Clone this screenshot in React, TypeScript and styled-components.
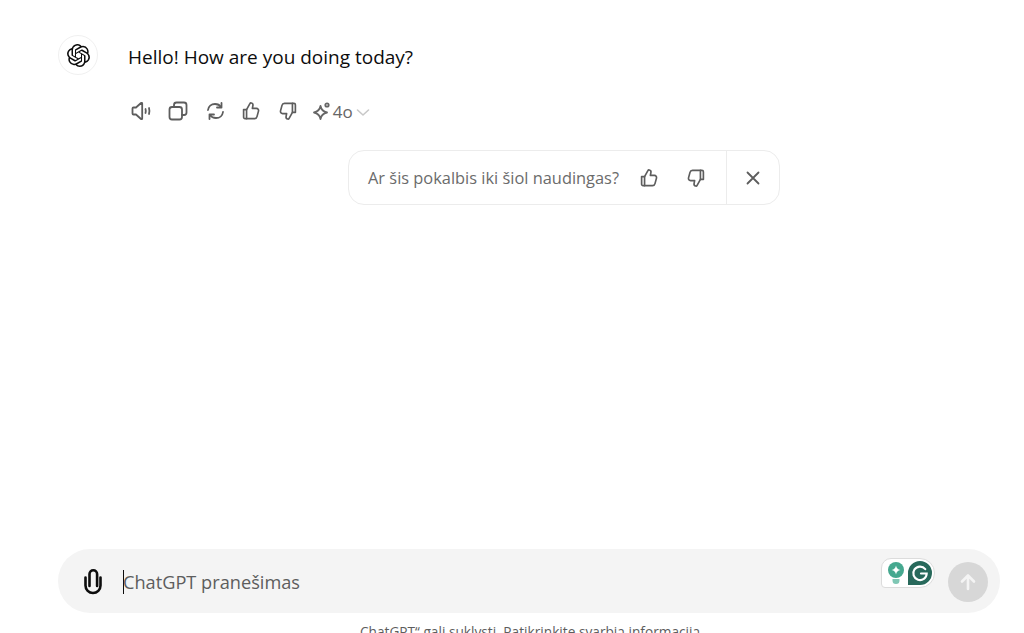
import React from 'react';
import styled, { createGlobalStyle } from 'styled-components';
import { SiOpenai } from 'react-icons/si';

const GlobalStyle = createGlobalStyle`
	html, body {
		margin: 0;
		padding: 0;
		height: 100%;
		overflow: hidden;
		background: #fff;
	}
	body {
		font-family: "Open Sans", "Noto Sans", "Liberation Sans", sans-serif;
	}
`;

const Page = styled.div`
	display: flex;
	flex-direction: column;
	height: 633px;
	overflow: hidden;
	padding: 35px 24px 0 58px;
	box-sizing: border-box;
`;

const Conversation = styled.main`
	flex: 1;
	min-height: 0;
`;

const MessageRow = styled.div`
	display: flex;
	gap: 30px;
`;

const Avatar = styled.div`
	display: flex;
	align-items: center;
	justify-content: center;
	flex: none;
	width: 40px;
	height: 40px;
	box-sizing: border-box;
	border: 1px solid #f0f0f0;
	border-radius: 50%;
	color: #0d0d0d;
	font-size: 23px;
`;

const MessageBody = styled.div`
	display: flex;
	flex-direction: column;
`;

const MessageText = styled.p`
	margin: 9px 0 0;
	font-size: 19px;
	line-height: 27px;
	color: #0d0d0d;
`;

const Actions = styled.div`
	display: flex;
	align-items: center;
	gap: 12.75px;
	margin-top: 28px;
	margin-left: 1px;
	height: 24px;
	color: #5d5d5d;
`;

const ActionIcon = styled.svg`
	display: block;
	width: 24px;
	height: 24px;
	flex: none;
	fill: none;
	stroke: currentColor;
	stroke-width: 1.8;
	stroke-linecap: round;
	stroke-linejoin: round;
`;

const ModelSwitch = styled.div`
	display: flex;
	align-items: center;
	font-size: 17px;
	color: #666;
`;

const ModelName = styled.span`
	margin-left: -4px;
`;

const Chevron = styled.svg`
	width: 14px;
	height: 14px;
	margin-left: 3px;
	margin-top: 2px;
	fill: none;
	stroke: #c8c8c8;
	stroke-width: 1.6;
	stroke-linecap: round;
	stroke-linejoin: round;
`;

const FeedbackCard = styled.div`
	display: flex;
	align-items: stretch;
	width: 432px;
	height: 55px;
	margin: 27px 0 0 290px;
	border: 1px solid #ececec;
	border-radius: 16px;
	box-sizing: border-box;
	color: #5d5d5d;
`;

const FeedbackMain = styled.div`
	display: flex;
	flex: 1;
	align-items: center;
	padding-left: 19px;
	border-right: 1px solid #ececec;
`;

const FeedbackText = styled.span`
	font-size: 16.4px;
	color: #6b6b6b;
`;

const FeedbackButtons = styled.div`
	display: flex;
	align-items: center;
	gap: 23px;
	margin-left: 18px;
`;

const CloseSlot = styled.div`
	display: flex;
	align-items: center;
	justify-content: center;
	flex: none;
	width: 52px;
`;

const Composer = styled.div`
	position: relative;
	display: flex;
	align-items: center;
	flex: none;
	height: 64px;
	padding: 0 12px 0 25px;
	border-radius: 32px;
	background: #f4f4f4;
`;

const Paperclip = styled.svg`
	flex: none;
	width: 20px;
	height: 28px;
	fill: none;
	stroke: #0d0d0d;
	stroke-width: 2.6;
	stroke-linecap: round;
`;

const Caret = styled.span`
	flex: none;
	width: 1px;
	height: 24px;
	margin-left: 20px;
	margin-top: 2px;
	background: #0d0d0d;
`;

const Placeholder = styled.span`
	flex: 1;
	margin-top: 2px;
	margin-left: -1px;
	font-size: 18.2px;
	color: #5d5d5d;
`;

const SendButton = styled.div`
	display: flex;
	align-items: center;
	justify-content: center;
	flex: none;
	width: 40px;
	height: 40px;
	margin-top: 2px;
	border-radius: 50%;
	background: #d7d7d7;
`;

const SendArrow = styled.svg`
	width: 20px;
	height: 20px;
	fill: none;
	stroke: #f4f4f4;
	stroke-width: 2.6;
	stroke-linecap: round;
	stroke-linejoin: round;
`;

/* browser extension badge sitting on top of the input */
const GrammarlyBadge = styled.div`
	position: absolute;
	top: 9px;
	right: 65px;
	display: flex;
	align-items: center;
	gap: 3px;
	width: 54px;
	height: 30px;
	padding-left: 5px;
	box-sizing: border-box;
	background: #fff;
	border: 1px solid #dcdcdc;
	border-radius: 10px 15px 15px 4px;
`;

const Footer = styled.footer`
	flex: none;
	height: 20px;
	box-sizing: border-box;
	padding-top: 10px;
	font-size: 13.7px;
	line-height: 18px;
	white-space: nowrap;
	text-align: center;
	color: #5d5d5d;
`;

const ThumbUp = () => (
	<ActionIcon viewBox="-1 -1 26 26">
		<path d="M4 10.500h3.200v9.800H5.500A1.500 1.500 0 0 1 4 18.800z" />
		<path d="M7.200 10.500l3.600-6.400c.3-.6.9-.9 1.500-.8 1.200.2 2 1.300 1.800 2.500l-.6 3.400h4.400c1.500 0 2.600 1.400 2.200 2.900l-1.600 6c-.3 1.300-1.400 2.200-2.700 2.200H7.200" />
	</ActionIcon>
);

const ThumbDown = () => (
	<ActionIcon viewBox="-1 -1 26 26">
		<path d="M20 13.500h-3.200V3.700h1.700a1.500 1.500 0 0 1 1.500 1.500z" />
		<path d="M16.800 13.500l-3.600 6.400c-.3.600-.9.900-1.500.8-1.200-.2-2-1.300-1.800-2.500l.6-3.400H6.100c-1.500 0-2.600-1.400-2.200-2.900l1.600-6c.3-1.300 1.400-2.200 2.700-2.200h8.600" />
	</ActionIcon>
);

const App: React.FC = () => {
	return (
		<>
			<GlobalStyle />
			<Page>
				<Conversation>
					<MessageRow>
						<Avatar>
							<SiOpenai />
						</Avatar>
						<MessageBody>
							<MessageText>Hello! How are you doing today?</MessageText>
							<Actions>
								<ActionIcon viewBox="0 0 24 24">
									<path d="M3.500 9.500v5c0 .6.400 1 1 1H7l5 4.500c.5.400 1.200.1 1.200-.6V4.600c0-.7-.7-1-1.200-.6L7 8.500H4.500c-.6 0-1 .4-1 1z" />
									<path d="M16.500 10c.4 1.300.4 2.700 0 4" />
									<path d="M20 9c.6 2 .6 4 0 6" />
								</ActionIcon>
								<ActionIcon viewBox="0 0 24 24">
									<rect x="3.500" y="8" width="12.500" height="12.500" rx="2.500" />
									<path d="M8 8V6a2.500 2.500 0 0 1 2.500-2.500H18A2.500 2.500 0 0 1 20.500 6v7.500A2.500 2.500 0 0 1 18 16h-2" />
								</ActionIcon>
								<ActionIcon viewBox="0 0 24 24">
									<path d="M5 11c.4-3.400 3.200-6 7-6 2.800 0 4.800 1.200 6 3" />
									<path d="M18.500 4v4.500H14" />
									<path d="M20 13c-.4 3.400-3.200 6-7 6-2.800 0-4.800-1.200-6-3" />
									<path d="M6.500 20v-4.500H11" />
								</ActionIcon>
								<ThumbUp />
								<ThumbDown />
								<ModelSwitch>
									<ActionIcon viewBox="0 0 24 24">
										<path d="M7.500 7c.8 4 2.500 5.700 6.500 6.500-4 .8-5.700 2.500-6.500 6.500-.8-4-2.500-5.700-6.500-6.500 4-.8 5.700-2.500 6.500-6.500z" />
										<circle cx="14" cy="6" r="1.700" />
									</ActionIcon>
									<ModelName>4o</ModelName>
									<Chevron viewBox="0 0 14 14">
										<path d="M1.500 5L7 10l5.500-5" />
									</Chevron>
								</ModelSwitch>
							</Actions>
						</MessageBody>
					</MessageRow>
					<FeedbackCard>
						<FeedbackMain>
							<FeedbackText>Ar šis pokalbis iki šiol naudingas?</FeedbackText>
							<FeedbackButtons>
								<ThumbUp />
								<ThumbDown />
							</FeedbackButtons>
						</FeedbackMain>
						<CloseSlot>
							<ActionIcon viewBox="0 0 24 24">
								<path d="M6.500 6.500l11 11M17.500 6.500l-11 11" />
							</ActionIcon>
						</CloseSlot>
					</FeedbackCard>
				</Conversation>
				<Composer>
					<Paperclip viewBox="0 0 20 28">
						<path d="M2.500 10.500v8a7.500 7.500 0 0 0 15 0v-8" />
						<path d="M6.500 19V7a3.800 3.800 0 0 1 7.600 0v12" />
					</Paperclip>
					<Caret />
					<Placeholder>ChatGPT pranešimas</Placeholder>
					<GrammarlyBadge>
						<svg width="18" height="22" viewBox="0 0 18 22">
							<circle cx="9" cy="8" r="8" fill="#45a88f" />
							<path d="M9 3.500c.5 2.700 1.800 4 4.500 4.500-2.700.5-4 1.800-4.500 4.500-.5-2.700-1.800-4-4.500-4.500 2.700-.5 4-1.800 4.500-4.500z" fill="#fff" />
							<path d="M5.500 17h7v1.500a3.500 3.500 0 0 1-7 0z" fill="#7fc7b4" />
						</svg>
						<svg width="24" height="24" viewBox="0 0 25 25">
							<path d="M12.500 0a12.500 12.500 0 0 1 0 25H0V12.500A12.500 12.500 0 0 1 12.500 0z" fill="#28695b" />
							<path d="M18 8.500a7 7 0 1 0 1.500 4.500h-6" fill="none" stroke="#fff" strokeWidth="2.200" strokeLinecap="round" />
						</svg>
					</GrammarlyBadge>
					<SendButton>
						<SendArrow viewBox="0 0 20 20">
							<path d="M10 17V3.500M4 9.500l6-6 6 6" />
						</SendArrow>
					</SendButton>
				</Composer>
				<Footer>„ChatGPT“ gali suklysti. Patikrinkite svarbią informaciją.</Footer>
			</Page>
		</>
	);
};

export default App;
